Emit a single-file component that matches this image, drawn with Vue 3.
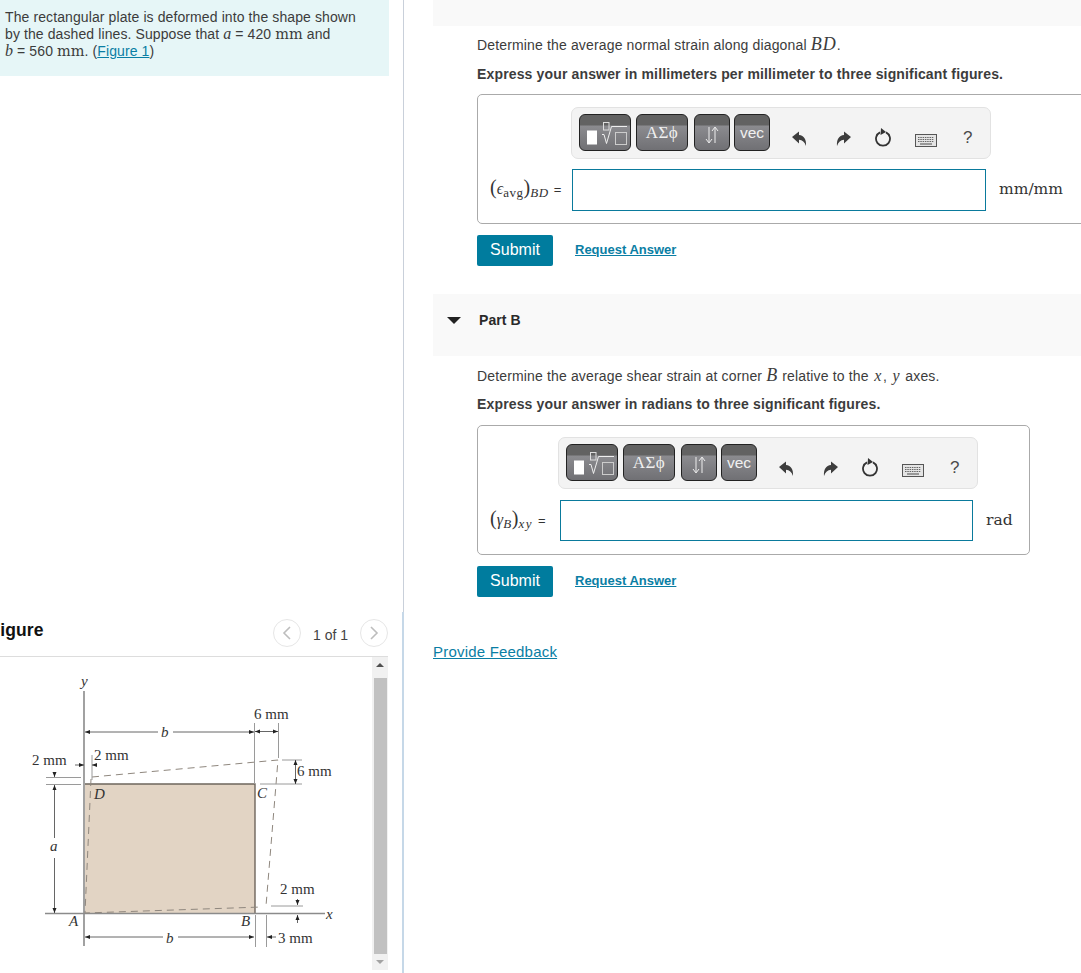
<script setup>
const parts = [
  {
    id: 'a',
    answerUnit: 'mm/mm',
  },
  {
    id: 'b',
    answerUnit: 'rad',
  },
]
</script>

<template>
  <div class="page">
    <aside class="left">
      <div class="left-top">
        <div class="intro">
          The rectangular plate is deformed into the shape shown<br />
          by the dashed lines. Suppose that <i class="mi">a</i> = 420 <span class="mn">mm</span> and<br />
          <i class="mi">b</i> = 560 <span class="mn">mm</span>. (<a class="link" href="#">Figure 1</a>)
        </div>
      </div>
      <div class="figure-panel">
        <div class="figure-head">
          <h3 class="figure-title">Figure</h3>
          <div class="pager">
            <span class="pager-btn">
              <svg width="10" height="14" viewBox="0 0 10 14"><path d="M8 1 2 7l6 6" fill="none" stroke="#bdbdbd" stroke-width="1.6" /></svg>
            </span>
            <span class="pager-text">1 of 1</span>
            <span class="pager-btn">
              <svg width="10" height="14" viewBox="0 0 10 14"><path d="M2 1l6 6-6 6" fill="none" stroke="#bdbdbd" stroke-width="1.6" /></svg>
            </span>
          </div>
        </div>
        <div class="figure-body">
          <!-- viewBox is in page pixels, so the points below read straight off the screenshot -->
          <svg class="diagram" width="372" height="314" viewBox="0 657 372 314">
            <rect x="85" y="784" width="170" height="129" fill="#e2d4c4" />
            <path d="M85 784H255V913" fill="none" stroke="#6e655c" stroke-width="1.4" />

            <!-- axes -->
            <path d="M84 691V946M45 913.500H325" fill="none" stroke="#8b8b8b" stroke-width="1.6" />

            <!-- dashed shape -->
            <path d="M92 777 278 760 266 906M91 779 85 913 262 907" fill="none" stroke="#8f877e" stroke-width="1" stroke-dasharray="7 5" />

            <!-- thin dimension lines -->
            <g fill="none" stroke="#9a9a9a" stroke-width="1">
              <path d="M254.500 723V784M278.500 723V758M282 760H302M260 784H302" />
              <path d="M46 777.500H81M46 784.500H81M92 755V780" />
              <path d="M255.500 915V947M266.500 915V947M271 906H303" />
            </g>
            <g fill="none" stroke="#555" stroke-width="0.9">
              <path d="M85 732H158M173 732H254M255 731.500H278" />
              <path d="M295.500 760V784" />
              <path d="M75 765H84M92 765H97" />
              <path d="M54.500 772V777M54.500 785V838M54.500 858V913" />
              <path d="M85 937H163M178 937H254M267 937H276" />
              <path d="M297.500 899V905M297.500 915V923" />
            </g>

            <!-- arrow heads -->
            <g fill="#222">
              <path d="M85 732l5-2v4zM254 732l-5-2v4zM255 731.500l5-2v4zM278 731.500l-5-2v4z" />
              <path d="M295.500 760l-2 5h4zM295.500 784l-2-5h4z" />
              <path d="M84 765l-5-2v4zM92 765l5-2v4z" />
              <path d="M54.500 777l-2-5h4zM54.500 785l-2 5h4zM54.500 913l-2-5h4z" />
              <path d="M85 937l5-2v4zM254 937l-5-2v4zM267 937l5-2v4z" />
              <path d="M297.500 905l-2-5h4zM297.500 915l-2 5h4z" />
            </g>

            <g class="fig-text">
              <text x="254" y="719">6 mm</text>
              <text x="297" y="776">6 mm</text>
              <text x="32" y="765">2 mm</text>
              <text x="94" y="760">2 mm</text>
              <text x="280" y="894">2 mm</text>
              <text x="278" y="943">3 mm</text>
            </g>
            <g class="fig-text fig-italic">
              <text x="81" y="686">y</text>
              <text x="161" y="737">b</text>
              <text x="50" y="851">a</text>
              <text x="166" y="943">b</text>
              <text x="94" y="799">D</text>
              <text x="257" y="798">C</text>
              <text x="69" y="926">A</text>
              <text x="241" y="926">B</text>
              <text x="326" y="919">x</text>
            </g>
          </svg>
          <div class="scrollbar">
            <span class="arrow-up"></span>
            <span class="thumb"></span>
            <span class="arrow-down"></span>
          </div>
        </div>
      </div>
    </aside>

    <main class="right">
      <div class="top-band"></div>

      <p class="question q-a">
        Determine the average normal strain along diagonal <i class="mi big">BD</i>.
      </p>
      <p class="instruction i-a">Express your answer in millimeters per millimeter to three significant figures.</p>

      <template v-for="part in parts" :key="part.id">
        <template v-if="part.id === 'b'">
          <div class="part-head">
            <span class="caret"></span>
            <h3 class="part-title">Part B</h3>
          </div>
          <p class="question q-b">
            Determine the average shear strain at corner <i class="mi big">B</i> relative to the
            <i class="mi spaced">x</i>, <i class="mi spaced">y</i> axes.
          </p>
          <p class="instruction i-b">Express your answer in radians to three significant figures.</p>
        </template>

        <div class="answer-box" :class="'box-' + part.id">
          <div class="toolbar">
            <button class="tb-btn tb-template">
              <svg width="44" height="30" viewBox="0 0 44 30">
                <rect x="4" y="12.500" width="10" height="14" fill="#fff" />
                <rect x="20.500" y="4.500" width="5.500" height="7.500" fill="none" stroke="#ddd" stroke-width="1" />
                <path d="M19 16.500h2l2.500 9 5-17H44" fill="none" stroke="#eee" stroke-width="1" />
                <rect x="32.500" y="14.500" width="11" height="12" fill="none" stroke="#ccc" stroke-width="1" />
              </svg>
            </button>
            <button class="tb-btn tb-greek">ΑΣϕ</button>
            <button class="tb-btn tb-small tb-updown">
              <svg width="16" height="20" viewBox="0 0 16 20">
                <path d="M5 2V17M2 14l3 4 3-4M11 18V3M8 6l3-4 3 4" fill="none" stroke="#eee" stroke-width="1" />
              </svg>
            </button>
            <button class="tb-btn tb-small tb-vec">vec</button>

            <svg class="ic ic-undo" width="16" height="16" viewBox="0 0 16 16">
              <path d="M1 6 8 0.500V4C13 4.500 15.500 8.500 15 15 13.500 11 11.500 9 8 8.800V12.500Z" fill="#3d3d3d" />
            </svg>
            <svg class="ic ic-redo" width="16" height="16" viewBox="0 0 16 16">
              <path d="M15 6 8 0.500V4C3 4.500 0.500 8.500 1 15 2.500 11 4.500 9 8 8.800V12.500Z" fill="#3d3d3d" />
            </svg>
            <svg class="ic ic-reset" width="16" height="20" viewBox="0 0 16 20">
              <path d="M5 5.400A7 7 0 1 0 11 5.400" fill="none" stroke="#333" stroke-width="1.800" />
              <path d="M6 1 11 5 5.500 8Z" fill="#333" />
            </svg>
            <svg class="ic ic-kb" width="22" height="13" viewBox="0 0 22 13">
              <rect x="0.500" y="0.500" width="21" height="12" fill="#e4e4e4" stroke="#555" />
              <path d="M3 3.500H19M3 5.500H19M3 7.500H19" stroke="#666" stroke-width="1" stroke-dasharray="1.500 0.800" />
              <path d="M5 10H17" stroke="#666" stroke-width="1.200" />
            </svg>
            <span class="ic-help">?</span>
          </div>

          <div class="answer-row">
            <span v-if="part.id === 'a'" class="answer-label">
              <span class="paren">(</span><i>ϵ</i><sub>avg</sub><span class="paren">)</span><sub class="sub-i">BD</sub>
              <span class="eq">=</span>
            </span>
            <span v-else class="answer-label">
              <span class="paren">(</span><i>γ</i><sub class="sub-i">B</sub><span class="paren">)</span><sub class="sub-i sub-xy">xy</sub>
              <span class="eq">=</span>
            </span>
            <input class="answer-input" type="text" />
            <span class="unit">{{ part.answerUnit }}</span>
          </div>
        </div>

        <div class="actions" :class="'actions-' + part.id">
          <button class="submit">Submit</button>
          <a class="link request" href="#">Request Answer</a>
        </div>
      </template>

      <a class="link feedback" href="#">Provide Feedback</a>
    </main>
  </div>
</template>

<style>
html,
body {
  margin: 0;
  background: #fff;
}
</style>

<style scoped>
.page {
  display: flex;
  width: 1081px;
  height: 973px;
  overflow: hidden;
  font-family: "Liberation Sans", Arial, sans-serif;
  font-size: 14px;
  letter-spacing: 0.1px;
  color: #3c3c3c;
  background: #fff;
}

/* left column */
.left {
  width: 404px;
  flex-shrink: 0;
  display: flex;
  flex-direction: column;
  overflow: hidden;
}

.left-top {
  height: 612px;
  border-right: 1px solid #c9d0da;
}

.intro {
  width: 384px;
  height: 67px;
  padding: 9px 0 0 5px;
  background: #e6f6f7;
  line-height: 17px;
  white-space: nowrap;
}

.mi {
  font-family: "Liberation Serif", serif;
  font-style: italic;
  font-size: 16px;
  line-height: 1;
}

.mi.big {
  font-size: 18px;
  letter-spacing: 1px;
}

.mi.spaced {
  margin: 0 1.500px;
}

.mn {
  font-family: "DejaVu Serif", serif;
  font-size: 14.500px;
  line-height: 1;
  letter-spacing: 0;
}

.link {
  color: #0a7ea4;
  text-decoration: underline;
}

.figure-panel {
  flex: 1;
  border-right: 2px solid #c6d8e8;
}

.figure-head {
  width: 388px;
  height: 44px;
  display: flex;
  align-items: center;
  border-bottom: 1px solid #dddddd;
}

.figure-title {
  margin: 0 0 8px -10.500px;
  font-size: 17.500px;
  font-weight: 700;
  color: #111;
}

.pager {
  margin-left: auto;
  display: flex;
  align-items: center;
  gap: 12px;
  padding-bottom: 2px;
}

.pager-btn {
  width: 26px;
  height: 26px;
  border: 1px solid #e6e6e6;
  border-radius: 50%;
  display: flex;
  align-items: center;
  justify-content: center;
}

.pager-text {
  margin-top: 3px;
  letter-spacing: 0;
  color: #444;
}

.figure-body {
  display: flex;
  width: 388px;
  height: 313px;
}

.diagram {
  display: block;
  flex-shrink: 0;
}

.fig-text {
  font-family: "Liberation Serif", serif;
  font-size: 15px;
  letter-spacing: 0;
  fill: #333;
}

.fig-italic {
  font-style: italic;
}

.scrollbar {
  width: 16px;
  height: 313px;
  background: #f1f1f1;
  display: flex;
  flex-direction: column;
  align-items: center;
}

.arrow-up {
  margin-top: 6px;
  border-left: 4px solid transparent;
  border-right: 4px solid transparent;
  border-bottom: 4px solid #505050;
}

.thumb {
  width: 13px;
  height: 276px;
  margin-top: 11px;
  background: #c1c1c1;
}

.arrow-down {
  margin-top: 6px;
  border-left: 4px solid transparent;
  border-right: 4px solid transparent;
  border-top: 4px solid #a3a3a3;
}

/* right column */
.right {
  flex: 1;
  min-width: 0;
  padding-left: 29px;
  overflow: hidden;
}

.top-band {
  height: 26px;
  background: #f9f9f9;
}

.question,
.instruction {
  margin: 0 0 0 44px;
  line-height: 20px;
  white-space: nowrap;
}

.question {
  letter-spacing: 0.15px;
}

.instruction {
  font-weight: 700;
  letter-spacing: 0.15px;
}

.q-a {
  margin-top: 9px;
}

.i-a {
  margin-top: 9px;
}

.q-b {
  margin-top: 10px;
}

.i-b {
  margin-top: 8px;
}

.answer-box {
  box-sizing: border-box;
  height: 130px;
  margin-left: 44px;
  padding-top: 12px;
  border: 1px solid #aaaaaa;
  border-radius: 5px;
}

.box-a {
  width: 640px;
  margin-top: 10px;
}

.box-b {
  width: 553px;
  margin-top: 11px;
  padding-top: 11px;
}

.toolbar {
  box-sizing: border-box;
  width: 420px;
  height: 52px;
  padding: 6px 0 0 7px;
  display: flex;
  align-items: flex-start;
  background: #f3f3f3;
  border: 1px solid #e2e2e2;
  border-radius: 7px;
}

.box-a .toolbar {
  margin-left: 93px;
}

.box-b .toolbar {
  margin-left: 80px;
}

.tb-btn {
  box-sizing: border-box;
  width: 52px;
  height: 37px;
  padding: 0;
  flex-shrink: 0;
  display: flex;
  align-items: center;
  justify-content: center;
  border: 1px solid #222;
  border-radius: 6px;
  color: #f0f0f0;
  background: linear-gradient(#626262 0, #626262 28%, #8b8b8f 32%, #707074 100%);
}

.tb-small {
  width: 36px;
}

.tb-greek {
  margin-left: 5px;
  font-family: "Liberation Serif", serif;
  font-size: 17px;
  letter-spacing: 0.5px;
}

.tb-updown {
  margin-left: 6px;
  padding-top: 5px;
}

.tb-vec {
  margin-left: 4px;
  font-family: "Liberation Sans", sans-serif;
  font-size: 15.500px;
  letter-spacing: 0;
}

.ic {
  flex-shrink: 0;
}

.ic-undo {
  margin: 17px 0 0 21px;
}

.ic-redo {
  margin: 17px 0 0 29px;
}

.ic-reset {
  margin: 13px 0 0 23px;
}

.ic-kb {
  margin: 20px 0 0 24px;
}

.ic-help {
  margin: 14px 0 0 26px;
  font-size: 17px;
  line-height: 20px;
  color: #4a4a4a;
}

.answer-row {
  display: flex;
  align-items: center;
  height: 42px;
  margin-top: 10px;
}

.box-b .answer-row {
  height: 41px;
  margin-top: 11px;
}

.answer-label {
  box-sizing: border-box;
  flex-shrink: 0;
  padding: 0 0 2px 12px;
  font-family: "Liberation Serif", serif;
  font-size: 16px;
  white-space: nowrap;
  color: #333;
}

.box-a .answer-label {
  width: 94px;
}

.box-b .answer-label {
  width: 82px;
}

.answer-label sub {
  font-size: 13px;
  line-height: 0;
  vertical-align: -3px;
  letter-spacing: 0.5px;
}

.answer-label .sub-xy {
  letter-spacing: 1.500px;
}

.sub-i {
  font-style: italic;
}

.paren {
  font-size: 20px;
  line-height: 0;
  font-weight: 400;
}

.eq {
  font-family: "Liberation Sans", sans-serif;
  font-size: 13px;
  margin-left: 5px;
}

.answer-input {
  box-sizing: border-box;
  width: 414px;
  height: 100%;
  flex-shrink: 0;
  padding: 0 6px;
  border: 1px solid #0a7a9c;
  background: #fff;
  outline: none;
}

.box-b .answer-input {
  width: 413px;
}

.unit {
  margin: 0 0 2px 13px;
  font-family: "DejaVu Serif", serif;
  font-size: 15.500px;
  letter-spacing: 0;
  white-space: nowrap;
  color: #333;
}

.actions {
  display: flex;
  align-items: center;
  margin: 11px 0 0 44px;
}

.submit {
  width: 76px;
  height: 31px;
  padding: 0 0 2px;
  border: none;
  border-radius: 2px;
  background: #007c9e;
  color: #fff;
  font-family: "Liberation Sans", sans-serif;
  font-size: 16px;
}

.request {
  margin: 0 0 2px 22px;
  font-size: 13px;
  font-weight: 700;
  letter-spacing: 0;
}

.part-head {
  display: flex;
  align-items: center;
  height: 62px;
  margin-top: 28px;
  padding-bottom: 11px;
  box-sizing: border-box;
  background: #f9f9f9;
}

.caret {
  margin: 1px 0 0 14px;
  border-left: 7px solid transparent;
  border-right: 7px solid transparent;
  border-top: 7px solid #222;
}

.part-title {
  margin: 0 0 0 18px;
  font-size: 14px;
  font-weight: 700;
  color: #2a2a2a;
}

.feedback {
  display: block;
  width: max-content;
  margin-top: 45px;
  font-size: 15px;
  letter-spacing: 0.2px;
  line-height: 20px;
}
</style>
